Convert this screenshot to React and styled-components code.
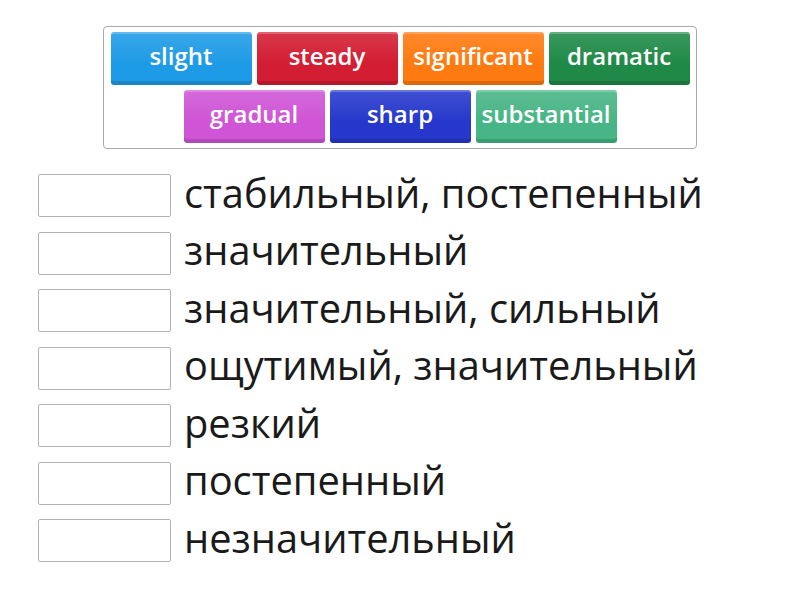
import React from 'react';
import styled, { createGlobalStyle } from 'styled-components';

const Global = createGlobalStyle`
  body {
    margin: 0;
    background: #fff;
    font-family: "Open Sans", "Liberation Sans", sans-serif;
  }
`

const Page = styled.div`
  width: 800px;
  height: 600px;
  overflow: hidden;
`

const Bank = styled.div`
  box-sizing: border-box;
  width: 594px;
  margin: 26px auto 0;
  padding: 5px 6px;
  border: 1px solid #a8a8a8;
  border-radius: 4px;
  display: flex;
  flex-wrap: wrap;
  justify-content: center;
  gap: 5px;
`

const Tile = styled.div`
  width: 141px;
  height: 53px;
  box-sizing: border-box;
  border-radius: 3px;
  background: linear-gradient(rgba(255, 255, 255, 0.12), rgba(255, 255, 255, 0) 60%), ${p => p.$bg};
  box-shadow: inset 0 2px 0 rgba(255, 255, 255, 0.22), inset 0 -4px 0 rgba(0, 0, 0, 0.14);
  color: #fff;
  font-weight: 600;
  font-size: 24px;
  display: flex;
  align-items: center;
  justify-content: center;
  padding-bottom: 6px;
`

const List = styled.div`
  margin-top: 25px;
  padding-left: 38px;
  display: flex;
  flex-direction: column;
  gap: 14.5px;
`

const Row = styled.div`
  display: flex;
  align-items: center;
  height: 43px;
  gap: 13px;
`

const Slot = styled.div`
  width: 133px;
  height: 43px;
  flex-shrink: 0;
  box-sizing: border-box;
  border: 1px solid #b4b4b4;
  border-radius: 2px;
  background: #fff;
`

const Label = styled.span`
  font-size: 39.8px;
  color: #1a1a1a;
  line-height: 1;
  white-space: nowrap;
  margin-top: -6px;
`

const tiles = [
  ['slight', '#1e9be6'],
  ['steady', '#d31d32'],
  ['significant', '#ff7a10'],
  ['dramatic', '#1f8a47'],
  ['gradual', '#cf55d6'],
  ['sharp', '#2638cc'],
  ['substantial', '#47b585'],
]

const rows = [
  'стабильный, постепенный',
  'значительный',
  'значительный, сильный',
  'ощутимый, значительный',
  'резкий',
  'постепенный',
  'незначительный',
]

const App = () => (
  <Page>
    <Global />
    <Bank>
      {tiles.map(([word, bg]) => (
        <Tile key={word} $bg={bg}>{word}</Tile>
      ))}
    </Bank>
    <List>
      {rows.map(text => (
        <Row key={text}>
          <Slot />
          <Label>{text}</Label>
        </Row>
      ))}
    </List>
  </Page>
)

export default App;
